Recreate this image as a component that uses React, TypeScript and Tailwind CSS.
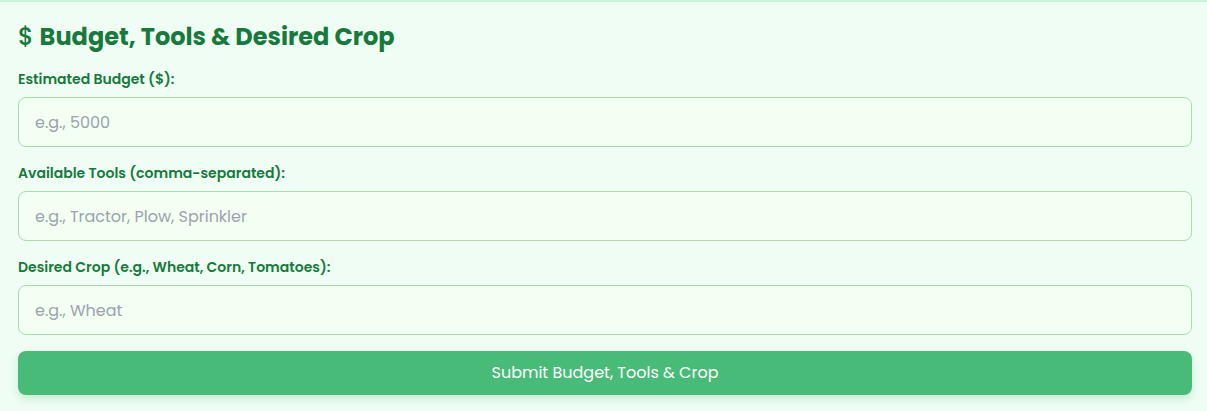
import React from "react";

export default function App() {
  const font = { fontFamily: '"Poppins", "Inter", "Noto Sans", sans-serif' };
  const inputCls =
    "w-full h-[50px] px-4 rounded-lg border border-[#a8dca8] bg-[#f2fff2] text-[16px] placeholder:text-[#9ca3af] outline-none mb-4";
  const labelCls = "text-[14px] leading-5 font-semibold text-[#177a3c] mb-2";
  return (
    <div className="w-[1207px] h-[411px] bg-[#f0fdf4] border-t-2 border-[#c6f6d5] pt-[19px] pl-[18px] pr-[15px]" style={font}>
      <h2 className="text-[24px] leading-8 font-bold text-[#177a3c] mb-4 flex items-center">
        <span className="font-medium mr-[6px]">$</span>
        <span>Budget, Tools &amp; Desired Crop</span>
      </h2>
      <div className="flex flex-col">
        <label className={labelCls}>Estimated Budget ($):</label>
        <input className={inputCls} placeholder="e.g., 5000" />
        <label className={labelCls}>Available Tools (comma-separated):</label>
        <input className={inputCls} placeholder="e.g., Tractor, Plow, Sprinkler" />
        <label className={labelCls}>Desired Crop (e.g., Wheat, Corn, Tomatoes):</label>
        <input className={inputCls} placeholder="e.g., Wheat" />
        <button className="w-full h-[44px] rounded-lg bg-[#48bb78] text-white text-[16px] shadow-[0_4px_8px_rgba(72,187,120,0.25)]">
          Submit Budget, Tools &amp; Crop
        </button>
      </div>
    </div>
  );
}
